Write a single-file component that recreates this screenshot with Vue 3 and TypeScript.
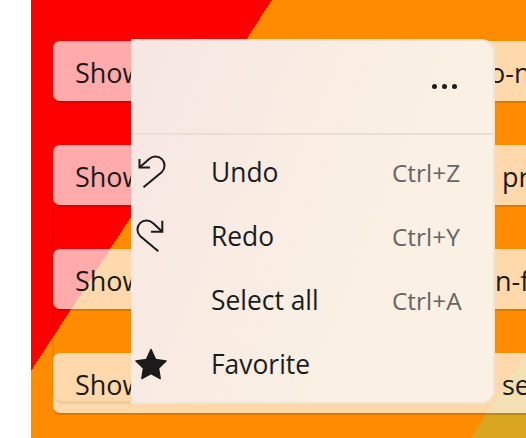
<script setup lang="ts">
interface Btn { tail: string; kind: string }
const buttons: Btn[] = [
  { tail: 'o-n', kind: 'first' },
  { tail: 'pr', kind: 'second' },
  { tail: 'n-f', kind: 'third' },
  { tail: 'se', kind: 'second' },
]
const items = [
  { label: 'Undo', key: 'Ctrl+Z', icon: 'undo' },
  { label: 'Redo', key: 'Ctrl+Y', icon: 'redo' },
  { label: 'Select all', key: 'Ctrl+A', icon: '' },
  { label: 'Favorite', key: '', icon: 'star' },
]
</script>

<template>
  <div class="page">
    <div class="stage">
      <button v-for="b in buttons" :key="b.tail" class="btn">
        <span class="head">Show</span>
        <span class="tail" :class="b.kind">{{ b.tail }}</span>
      </button>
      <div class="ghost"></div>
      <div class="menu">
        <div class="bar"><span class="dots"><i></i><i></i><i></i></span></div>
        <ul class="list">
          <li v-for="it in items" :key="it.label" class="item">
            <span class="icon">
              <svg v-if="it.icon === 'undo'" viewBox="0 0 40 40" width="40" height="40" fill="none" stroke="#1b1b1b" stroke-width="2">
                <path d="M8.5 8v8.5H19" />
                <path d="M8.5 16.5 18.1 8.1A9 9 0 0 1 30.9 20.9L12.5 36.3" />
              </svg>
              <svg v-else-if="it.icon === 'redo'" viewBox="0 0 40 40" width="40" height="40" fill="none" stroke="#1b1b1b" stroke-width="2">
                <path d="M31.3 5.7v11H20" />
                <path d="M31.3 16.7 21.9 8.1A9 9 0 0 0 9.1 20.9L27.3 36.3" />
              </svg>
              <svg v-else-if="it.icon === 'star'" viewBox="0 0 40 40" width="40" height="40" fill="#1b1b1b" stroke="#1b1b1b" stroke-width="1.5" stroke-linejoin="round">
                <path d="M20 6.5 24.6 16.6 35 18 27.5 25.3 29.2 35.5 20 30.5 10.8 35.5 12.5 25.3 5 18 15.4 16.6Z" />
              </svg>
            </span>
            <span class="label">{{ it.label }}</span>
            <span class="key">{{ it.key }}</span>
          </li>
        </ul>
      </div>
    </div>
  </div>
</template>

<style>
html, body { margin: 0; background: #fff; overflow: hidden; }
</style>

<style scoped>
.page {
  width: 526px;
  height: 438px;
  padding-left: 31px;
  box-sizing: border-box;
  overflow: hidden;
  font-family: "Open Sans", "Noto Sans", sans-serif;
}
.stage {
  position: relative;
  height: 438px;
  padding: 41px 0 0 22px;
  box-sizing: border-box;
  overflow: hidden;
  display: flex;
  flex-direction: column;
  gap: 44px;
  background: linear-gradient(123deg, #f00 202px, #ff8c00 202px, #ff8c00 607.6px, #daa520 607.6px);
}
.btn {
  width: 520px;
  height: 60px;
  padding: 2px 0 0 22px;
  flex: none;
  display: flex;
  align-items: center;
  border: 0;
  border-radius: 7px;
  box-shadow: 0 2px 0 rgba(0, 0, 0, 0.15);
  background: rgba(255, 255, 255, 0.67);
  box-sizing: border-box;
  font: 27px "Open Sans", "Noto Sans", sans-serif;
  color: #1b1b1b;
  text-align: left;
}
.head { width: 400px; flex: none; }
.tail { flex: none; }
.tail.first { margin-left: 14px; }
.tail.second { margin-left: 27px; }
.tail.third { margin-left: 20px; }
.ghost {
  position: absolute;
  left: 21px;
  top: 205px;
  width: 90px;
  height: 199px;
  box-sizing: border-box;
  border: solid rgba(0, 0, 0, 0.06);
  border-width: 0 0 3px 2px;
  border-radius: 0 0 0 10px;
}
.menu {
  position: absolute;
  left: 100px;
  top: 39px;
  width: 364px;
  height: 365px;
  box-sizing: border-box;
  border-radius: 0 14px 14px 0;
  border: 2px solid #efe4d8;
  border-left: 0;
  background: linear-gradient(112deg, #f6e6e2 0%, #f8ebe3 30%, #faf0e4 65%, #faf0e4 100%);
  display: flex;
  flex-direction: column;
}
.bar {
  height: 94px;
  flex: none;
  border-bottom: 2px solid #e9dfd6;
  display: flex;
  align-items: center;
  justify-content: flex-end;
  padding: 0 36px 2px 0;
  box-sizing: border-box;
}
.dots { display: flex; gap: 5px; }
.dots i { width: 5px; height: 5px; border-radius: 50%; background: #1b1b1b; display: block; }
.list { list-style: none; margin: 0; padding: 5px 0 0; }
.item { height: 64px; display: flex; align-items: center; }
.icon { width: 40px; height: 40px; flex: none; margin: -2px 40px 0 0; }
.icon svg { display: block; }
.label { font-size: 26.4px; color: #1b1b1b; flex: 1; }
.key { font-size: 24.4px; color: #666; width: 101px; flex: none; }
</style>
